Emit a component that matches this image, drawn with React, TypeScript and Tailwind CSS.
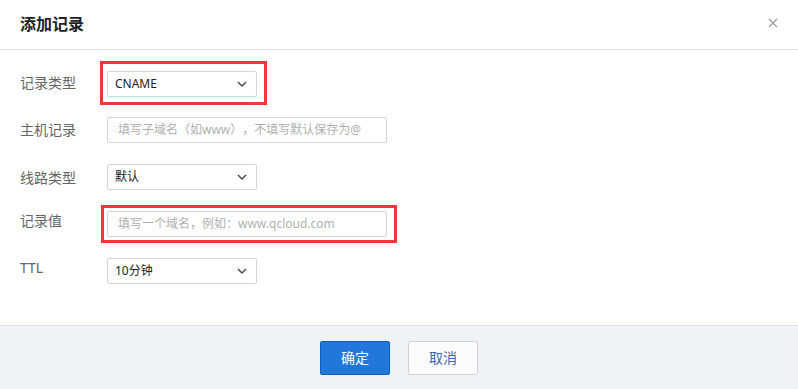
import React from "react";

const font = { fontFamily: '"Noto Sans", "Noto Sans CJK SC", sans-serif' };

function Chevron() {
  return (
    <svg width="10" height="6" viewBox="0 0 10 6" className="shrink-0">
      <path d="M1 1 L5 5 L9 1" fill="none" stroke="#444" strokeWidth="1.4" />
    </svg>
  );
}

function Select({ value }: { value: string }) {
  return (
    <div className="w-[150px] h-[26px] border border-[#d5d5d5] rounded-[2px] bg-white flex items-center justify-between pl-[7px] pr-[9px] text-[12px] text-[#222]">
      <span>{value}</span>
      <Chevron />
    </div>
  );
}

function Input({ placeholder }: { placeholder: string }) {
  return (
    <div className="w-[280px] h-[26px] border border-[#d5d5d5] rounded-[2px] bg-white flex items-center pl-[10px] text-[12px] text-[#b0b0b0] whitespace-nowrap [text-spacing-trim:space-all]">
      {placeholder}
    </div>
  );
}

function Highlight({ children, className }: { children: React.ReactNode; className: string }) {
  return (
    <div className="relative">
      {children}
      <div className={"absolute border-[3px] border-[#f2363a] pointer-events-none " + className} />
    </div>
  );
}

function Row({ label, pt, children, mt }: { label: string; pt: string; children: React.ReactNode; mt: string }) {
  return (
    <div className={"flex items-start " + mt}>
      <div className={"w-[87px] text-[14px] leading-[20px] text-[#666] " + pt}>{label}</div>
      {children}
    </div>
  );
}

export default function App() {
  return (
    <div className="w-[798px] h-[389px] bg-white flex flex-col overflow-hidden" style={font}>
      <div className="h-[50px] shrink-0 border-b border-[#e2e2e2] flex items-center justify-between pl-[20px] pr-[20px]">
        <span className="text-[16px] font-bold text-[#222] mt-[-2px]">添加记录</span>
        <svg width="10" height="10" viewBox="0 0 10 10" className="mt-[-4px]">
          <path d="M1 1 L9 9 M9 1 L1 9" stroke="#9aa0a8" strokeWidth="1.3" />
        </svg>
      </div>
      <div className="flex-1 pl-[20px] pt-[21px]">
        <Row label="记录类型" pt="pt-[2px]" mt="">
          <Highlight className="left-[-7px] top-[-10px] right-[-10px] bottom-[-8px]">
            <Select value="CNAME" />
          </Highlight>
        </Row>
        <Row label="主机记录" pt="pt-[3px]" mt="mt-[20px]">
          <Input placeholder="填写子域名（如www），不填写默认保存为@" />
        </Row>
        <Row label="线路类型" pt="pt-[4px]" mt="mt-[21px]">
          <Select value="默认" />
        </Row>
        <Row label="记录值" pt="pt-0" mt="mt-[21px]">
          <Highlight className="left-[-6px] top-[-6px] right-[-10px] bottom-[-6px]">
            <Input placeholder="填写一个域名，例如：www.qcloud.com" />
          </Highlight>
        </Row>
        <Row label="TTL" pt="pt-0" mt="mt-[21px]">
          <Select value="10分钟" />
        </Row>
      </div>
      <div className="h-[64px] shrink-0 bg-[#eff2f6] border-t border-[#dcdee2] flex items-center justify-center gap-[18px]">
        <button className="w-[70px] h-[34px] bg-[#2277da] border border-[#0f5fbd] rounded-[2px] text-white text-[14px]">
          确定
        </button>
        <button className="w-[70px] h-[34px] bg-[#fcfcfc] border border-[#cfd2d6] rounded-[2px] text-[#3f63ad] text-[14px]">
          取消
        </button>
      </div>
    </div>
  );
}
